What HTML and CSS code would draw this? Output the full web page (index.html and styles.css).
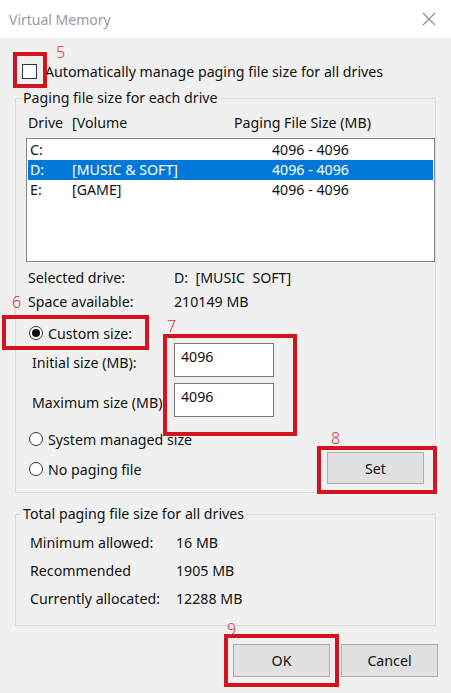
FILE: index.html
```html
<!DOCTYPE html>
<html lang="en">
    <head>
        <meta charset="UTF-8" />
        <meta name="viewport" content="width=device-width, initial-scale=1.0" />
        <title>Virtual Memory</title>
        <link rel="stylesheet" href="styles.css">
    </head>
    <body>
        <div class="titlebar">
            <span class="title">Virtual Memory</span>
            <svg class="close" width="14" height="14" viewBox="0 0 14 14">
                <path d="M1 1 L13 13 M13 1 L1 13" stroke="#8a8a8a" stroke-width="1.1" fill="none" />
            </svg>
        </div>

        <div class="dialog">
            <label class="check-row">
                <span class="checkbox"></span>Automatically manage paging file size for all drives
            </label>

            <fieldset class="group drives">
                <legend>Paging file size for each drive</legend>
                <div class="list-head">
                    <span>Drive</span><span>[Volume</span><span>Paging File Size (MB)</span>
                </div>
                <div class="listbox">
                    <div class="list-row"><span>C:</span><span></span><span>4096 - 4096</span></div>
                    <div class="list-row selected"><span>D:</span><span>[MUSIC &amp; SOFT]</span><span>4096 - 4096</span></div>
                    <div class="list-row"><span>E:</span><span>[GAME]</span><span>4096 - 4096</span></div>
                </div>

                <div class="info">
                    <span>Selected drive:</span><span>D:&nbsp; [MUSIC&nbsp; SOFT]</span>
                    <span>Space available:</span><span>210149 MB</span>
                </div>

                <label class="radio-row custom"><span class="radio checked"></span>Custom size:</label>

                <div class="sizes">
                    <div class="size-row">
                        <span class="size-label">Initial size (MB):</span>
                        <input class="field" type="text" value="4096" />
                    </div>
                    <div class="size-row">
                        <span class="size-label">Maximum size (MB):</span>
                        <input class="field" type="text" value="4096" />
                    </div>
                </div>

                <div class="bottom-row">
                    <div class="radios">
                        <label class="radio-row"><span class="radio"></span>System managed size</label>
                        <label class="radio-row"><span class="radio"></span>No paging file</label>
                    </div>
                    <button class="btn set">Set</button>
                </div>
            </fieldset>

            <fieldset class="group totals">
                <legend>Total paging file size for all drives</legend>
                <div class="total-grid">
                    <span>Minimum allowed:</span><span>16 MB</span>
                    <span>Recommended</span><span>1905 MB</span>
                    <span>Currently allocated:</span><span>12288 MB</span>
                </div>
            </fieldset>

            <div class="buttons">
                <button class="btn">OK</button>
                <button class="btn">Cancel</button>
            </div>
        </div>

        <!-- tutorial annotations drawn over the dialog -->
        <div class="mark box-5"></div>
        <div class="mark box-6"></div>
        <div class="mark box-7"></div>
        <div class="mark box-8"></div>
        <div class="mark box-9"></div>
        <span class="num num-5">5</span>
        <span class="num num-6">6</span>
        <span class="num num-7">7</span>
        <span class="num num-8">8</span>
        <span class="num num-9">9</span>
    </body>
</html>
```

FILE: styles.css
```css
* {
    margin: 0;
    padding: 0;
    box-sizing: border-box;
}

body {
    width: 451px;
    height: 693px;
    background: #f0f0f0;
    font-family: "Noto Sans", "Open Sans", sans-serif;
    font-size: 14.2px;
    color: #111;
    position: relative;
    overflow: hidden;
}

.titlebar {
    height: 38px;
    background: #fff;
    display: flex;
    align-items: center;
    justify-content: space-between;
    padding: 0 15px 0 9px;

    .title {
        color: #9a9a9a;
        font-size: 14px;
    }
}

.check-row {
    display: flex;
    align-items: center;
    height: 22px;
    margin-top: 22px;
    padding-left: 22px;

    .checkbox {
        width: 15px;
        height: 15px;
        border: 1px solid #333;
        background: #fff;
        margin-right: 8px;
    }
}

.group {
    margin: 0 15px;
    border: 1px solid #dcdcdc;
    padding: 0 0 0 10px;

    legend {
        margin-left: -5px;
        padding: 0 2px;
        line-height: 20px;
    }
}

.drives {
    margin-top: 6px;
    padding-bottom: 8px;
}

.list-head {
    display: grid;
    grid-template-columns: 44px 162px 1fr;
    height: 20px;
    line-height: 20px;
    margin: 5px 0 5px;
    padding-left: 2px;
}

.listbox {
    height: 124px;
    background: #fff;
    border: 1px solid #828790;
    padding: 1px;

    .list-row {
        display: grid;
        grid-template-columns: 42px 200px 1fr;
        height: 20px;
        line-height: 20px;
        padding-left: 2px;
    }

    .selected {
        background: #0078d7;
        color: #fff;
    }
}

.info {
    display: grid;
    grid-template-columns: 146px 1fr;
    grid-auto-rows: 24px;
    line-height: 24px;
    margin-top: 4px;
    padding-left: 2px;
}

.radio-row {
    display: flex;
    align-items: center;
    height: 30px;
    padding-left: 3px;

    .radio {
        width: 14px;
        height: 14px;
        border: 1px solid #333;
        border-radius: 50%;
        background: #fff;
        margin-right: 5px;
        display: grid;
        place-items: center;
    }

    .checked::after {
        content: "";
        width: 8px;
        height: 8px;
        border-radius: 50%;
        background: #111;
    }
}

.custom {
    height: 22px;
    margin-top: 8px;
}

.sizes {
    margin-top: -1px;
    display: grid;
    gap: 6px;
}

.size-row {
    display: grid;
    grid-template-columns: 142px 100px;
    align-items: center;
    height: 34px;
    padding-left: 6px;

    .size-label {
        margin-top: 4px;
    }

    .field {
        width: 100px;
        height: 34px;
        border: 1px solid #7a7a7a;
        background: #fff;
        font: inherit;
        color: #111;
        padding: 0 0 8px 6px;
    }
}

.bottom-row {
    display: flex;
    justify-content: space-between;
    align-items: flex-end;
    margin-top: 7px;
}

.btn {
    width: 97px;
    height: 32px;
    background: #e1e1e1;
    border: 1px solid #adadad;
    font: inherit;
    color: #111;
}

.set {
    margin-right: 11px;
}

.totals {
    margin-top: 11px;
    padding-bottom: 12px;
}

.total-grid {
    display: grid;
    grid-template-columns: 146px 1fr;
    grid-auto-rows: 28px;
    line-height: 28px;
    margin-top: 5px;
    padding-left: 4px;
}

.buttons {
    display: flex;
    justify-content: flex-end;
    gap: 11px;
    margin-top: 18px;
    padding-right: 13px;

    .btn {
        height: 33px;
    }
}

.mark {
    position: absolute;
    border: 4px solid #d3141e;
}

.box-5 { left: 13px; top: 52px; width: 34px; height: 36px; }
.box-6 { left: 2px; top: 315px; width: 147px; height: 35px; }
.box-7 { left: 163px; top: 334px; width: 134px; height: 102px; }
.box-8 { left: 317px; top: 446px; width: 120px; height: 48px; }
.box-9 { left: 224px; top: 634px; width: 115px; height: 53px; }

.num {
    position: absolute;
    color: #d03a3a;
    font-size: 16px;
    line-height: 16px;
    font-weight: 300;
}

.num-5 { left: 56px; top: 44px; }
.num-6 { left: 12px; top: 294px; }
.num-7 { left: 167px; top: 318px; }
.num-8 { left: 331px; top: 430px; }
.num-9 { left: 227px; top: 621px; }
```
